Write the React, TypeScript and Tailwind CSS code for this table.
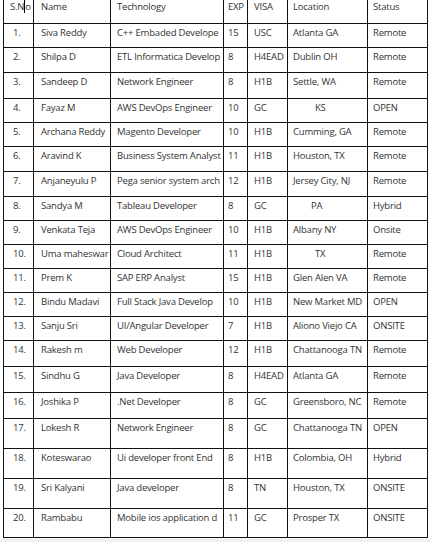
type Row = {
  no: string
  name: string
  tech: string
  exp: string
  visa: string
  loc: string
  status: string
  locIndent?: string
  h: number
}

const rows: Row[] = [
  { no: '1.', name: 'Siva Reddy', tech: 'C++ Embaded Develope', exp: '15', visa: 'USC', loc: 'Atlanta GA', status: 'Remote', h: 24 },
  { no: '2.', name: 'Shilpa D', tech: 'ETL Informatica Develop', exp: '8', visa: 'H4EAD', loc: 'Dublin OH', status: 'Remote', h: 25 },
  { no: '3.', name: 'Sandeep D', tech: 'Network Engineer', exp: '8', visa: 'H1B', loc: 'Settle, WA', status: 'Remote', h: 26 },
  { no: '4.', name: 'Fayaz M', tech: 'AWS DevOps Engineer', exp: '10', visa: 'GC', loc: 'KS', status: 'OPEN', locIndent: 'pl-[27px]', h: 24 },
  { no: '5.', name: 'Archana Reddy', tech: 'Magento Developer', exp: '10', visa: 'H1B', loc: 'Cumming, GA', status: 'Remote', h: 24 },
  { no: '6.', name: 'Aravind K', tech: 'Business System Analyst', exp: '11', visa: 'H1B', loc: 'Houston, TX', status: 'Remote', h: 25 },
  { no: '7.', name: 'Anjaneyulu P', tech: 'Pega senior system arch', exp: '12', visa: 'H1B', loc: 'Jersey City, NJ', status: 'Remote', h: 25 },
  { no: '8.', name: 'Sandya M', tech: 'Tableau Developer', exp: '8', visa: 'GC', loc: 'PA', status: 'Hybrid', locIndent: 'pl-[23px]', h: 24 },
  { no: '9.', name: 'Venkata Teja', tech: 'AWS DevOps Engineer', exp: '10', visa: 'H1B', loc: 'Albany NY', status: 'Onsite', h: 24 },
  { no: '10.', name: 'Uma maheswar', tech: 'Cloud Architect', exp: '11', visa: 'H1B', loc: 'TX', status: 'Remote', locIndent: 'pl-[27px]', h: 24 },
  { no: '11.', name: 'Prem K', tech: 'SAP ERP Analyst', exp: '15', visa: 'H1B', loc: 'Glen Alen VA', status: 'Remote', h: 24 },
  { no: '12.', name: 'Bindu Madavi', tech: 'Full Stack Java Develop', exp: '10', visa: 'H1B', loc: 'New Market MD', status: 'OPEN', h: 24 },
  { no: '13.', name: 'Sanju Sri', tech: 'UI/Angular Developer', exp: '7', visa: 'H1B', loc: 'Aliono Viejo CA', status: 'ONSITE', h: 24 },
  { no: '14.', name: 'Rakesh m', tech: 'Web Developer', exp: '12', visa: 'H1B', loc: 'Chattanooga TN', status: 'Remote', h: 26 },
  { no: '15.', name: 'Sindhu G', tech: 'Java Developer', exp: '8', visa: 'H4EAD', loc: 'Atlanta GA', status: 'Remote', h: 26 },
  { no: '16.', name: 'Joshika P', tech: '.Net Developer', exp: '8', visa: 'GC', loc: 'Greensboro, NC', status: 'Remote', h: 26 },
  { no: '17.', name: 'Lokesh R', tech: 'Network Engineer', exp: '8', visa: 'GC', loc: 'Chattanooga TN', status: 'OPEN', h: 30 },
  { no: '18.', name: 'Koteswarao', tech: 'Ui developer front End', exp: '8', visa: 'H1B', loc: 'Colombia, OH', status: 'Hybrid', h: 30 },
  { no: '19.', name: 'Sri Kalyani', tech: 'Java developer', exp: '8', visa: 'TN', loc: 'Houston, TX', status: 'ONSITE', h: 30 },
  { no: '20.', name: 'Rambabu', tech: 'Mobile ios application d', exp: '11', visa: 'GC', loc: 'Prosper TX', status: 'ONSITE', h: 29 },
]

const cell = 'border border-[#111] align-top pt-[2px] overflow-hidden whitespace-nowrap text-clip'
const head = 'border border-t-0 border-[#111] align-top font-normal text-left overflow-hidden whitespace-nowrap'

export default function App() {
  return (
    <div className="w-[431px] h-[542px] bg-white overflow-hidden flex flex-col">
      <div className="pl-[3px]">
        <table
          className="w-[424px] table-fixed border-collapse text-[9.5px] leading-[14px] tracking-[-0.2px] text-[#333]"
          style={{ fontFamily: '"Open Sans", "Noto Sans", sans-serif' }}
        >
          <thead>
            <tr className="h-[23px]">
              <th className={`${head} w-[30px] pl-[6px]`}>
                S.N<span className="inline-block w-px h-[13px] bg-black align-top" />o
              </th>
              <th className={`${head} w-[77px] pl-[7px]`}>Name</th>
              <th className={`${head} w-[113px] pl-[6px]`}>Technology</th>
              <th className={`${head} w-[24px] pl-[4px]`}>EXP</th>
              <th className={`${head} w-[40px] pl-[6px]`}>VISA</th>
              <th className={`${head} w-[80px] pl-[5px]`}>Location</th>
              <th className={`${head} w-[60px] pl-[5px]`}>Status</th>
            </tr>
          </thead>
          <tbody>
            {rows.map((r) => (
              <tr key={r.no} style={{ height: r.h }}>
                <td className={`${cell} pl-[9px]`}>{r.no}</td>
                <td className={`${cell} pl-[7px]`}>{r.name}</td>
                <td className={`${cell} pl-[6px]`}>{r.tech}</td>
                <td className={`${cell} pl-[4px]`}>{r.exp}</td>
                <td className={`${cell} pl-[6px]`}>{r.visa}</td>
                <td className={`${cell} ${r.locIndent ?? 'pl-[5px]'}`}>{r.loc}</td>
                <td className={`${cell} pl-[5px]`}>{r.status}</td>
              </tr>
            ))}
          </tbody>
        </table>
      </div>
      <div className="flex-1 bg-[#f0f0f0] mt-[1px]" />
    </div>
  )
}
